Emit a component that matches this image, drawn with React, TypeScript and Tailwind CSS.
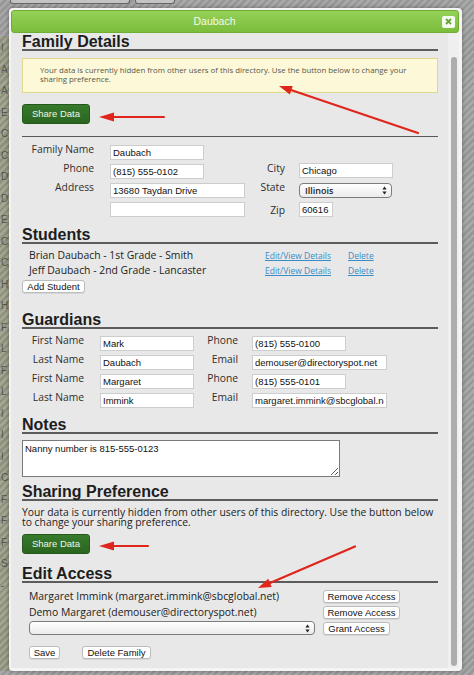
import React from "react";

const body = "font-['Open_Sans','DejaVu_Sans',sans-serif]";
const arial = "font-['Liberation_Sans',Arial,sans-serif]";

const Heading = ({ children, className = "" }: { children: React.ReactNode; className?: string }) => (
  <h2
    className={`${arial} text-[16px] font-bold leading-[15px] text-[#1d1d1d] border-b-2 border-[#5c5c5c] ${className}`}
  >
    {children}
  </h2>
);

const Field = ({ value = "", w }: { value?: string; w: string }) => (
  <input
    readOnly
    value={value}
    className={`${arial} ${w} block h-[15px] border border-[#cdcdcd] bg-white px-[2px] text-[9.5px] text-[#111] outline-none`}
  />
);

const GrayButton = ({ label, w }: { label: string; w: string }) => (
  <button
    className={`${arial} ${w} block h-[13px] rounded-[3px] border border-[#bcbcbc] bg-white text-[9.5px] leading-[11px] text-[#111] shadow-[0_1px_0_#d6d6d6]`}
  >
    {label}
  </button>
);

const ShareButton = ({ className = "" }: { className?: string }) => (
  <button
    className={`${arial} ${className} block w-[68px] h-[20px] rounded-[3px] border border-[#235a1a] bg-gradient-to-b from-[#387a2c] to-[#2a6520] text-[9.5px] text-[#eef5ea]`}
  >
    Share Data
  </button>
);

const SelectArrows = () => (
  <svg width="5" height="9" viewBox="0 0 5 9" className="block">
    <path d="M2.5 0.5 L4.6 3.6 L0.4 3.6 Z" fill="#222" />
    <path d="M2.5 8.5 L4.6 5.4 L0.4 5.4 Z" fill="#222" />
  </svg>
);

const Select = ({ value = "", w, h }: { value?: string; w: string; h: string }) => (
  <div
    className={`${w} ${h} flex items-center justify-between rounded-[4px] border border-[#7c7c7c] bg-gradient-to-b from-white to-[#ececec] pl-[5px] pr-[4px]`}
  >
    <span className={`${body} text-[9px] leading-[10px] font-semibold text-[#222]`}>{value}</span>
    <SelectArrows />
  </div>
);

const label = `${body} text-[10.3px] leading-[8px] text-[#2e2e2e] text-right`;

const Arrows = () => (
  <svg className="pointer-events-none absolute left-0 top-0" width="474" height="675" viewBox="0 0 474 675">
    <g stroke="#e0261c" strokeWidth="2.2" strokeLinecap="round" fill="none">
      <line x1="418" y1="133" x2="291" y2="90" />
      <line x1="164" y1="117" x2="112" y2="117" />
      <line x1="148" y1="546" x2="112" y2="546" />
      <line x1="355" y1="546.5" x2="270" y2="583" />
    </g>
    <g fill="#e0261c">
      <polygon points="279,86 289.9,94.5 292.7,85.9" />
      <polygon points="99,117 114,112.5 114,121.5" />
      <polygon points="99,546 114,541.5 114,550.5" />
      <polygon points="258,588 271.7,587 268.2,578.8" />
    </g>
  </svg>
);

const sideLetters = ["I", "A", "A", "E", "C", "C", "D", "D", "E", "C", "C", "H", "H", "F", "L", "F", "L", "I", "I", "I", "C", "F", "F", "F", "S", "-"];

export default function App() {
  return (
    <div className="relative w-[474px] h-[675px] overflow-hidden flex flex-col bg-[repeating-linear-gradient(135deg,#a9a9a9_0px,#a9a9a9_2.5px,#979797_2.5px,#979797_5px)]">
      {/* page behind the dialog */}
      <div className="h-[8px] flex items-start gap-[5px] pl-[10px]">
        <div className="w-[120px] h-[4px] rounded-b-[3px] border-x border-b border-[#666] bg-[#c4c4c4]" />
        <div className="w-[40px] h-[4px] rounded-b-[3px] border-x border-b border-[#666] bg-[#c4c4c4]" />
      </div>
      <div className="flex flex-1">
        <div className="w-[9px] mt-[28px] mb-[4px] flex flex-col gap-[9.5px] overflow-hidden bg-[repeating-linear-gradient(135deg,#a4a692_0px,#a4a692_2.5px,#8f917f_2.5px,#8f917f_5px)] pl-[1px] pt-[6px]">
          {sideLetters.map((l, i) => (
            <span key={i} className={`${arial} text-[10px] leading-[12px] text-[#3a3a34] opacity-70`}>
              {l}
            </span>
          ))}
        </div>

        {/* dialog */}
        <div className="w-[453px] h-[663px] flex flex-col rounded-[4px] bg-[#f4f4f4] pl-[2px] pr-[3px] pt-[2px] pb-[3px] shadow-[0_0_4px_rgba(0,0,0,0.35)]">
          <div className="h-[23px] flex items-center rounded-[3px] border border-[#6fae34] bg-gradient-to-b from-[#95d158] to-[#7bbd3b]">
            <span className={`${arial} flex-1 mr-[25px] text-center text-[10.5px] text-[#f4faee]`}>Daubach</span>
            <div className="w-[13px] h-[12px] mr-[3px] flex items-center justify-center rounded-[2px] bg-[#f6fbf1]">
              <svg width="7" height="7" viewBox="0 0 7 7" className="block">
                <path d="M1 1 L6 6 M6 1 L1 6" stroke="#66a533" strokeWidth="1.8" />
              </svg>
            </div>
          </div>

          <div className="flex flex-1 min-h-0">
            <div className="flex-1 overflow-hidden bg-[#e8e8e8] pl-[11px] pr-[10px] pt-[1px]">
              <Heading>Family Details</Heading>
              <div className="mt-[7px] h-[35px] border border-[#e0d68c] bg-[#fcf8d8] pl-[17px] pt-[7px]">
                <p className={`${body} whitespace-nowrap text-[7.8px] leading-[8.5px] text-[#5a5746]`}>
                  Your data is currently hidden from other users of this directory. Use the button below to change your
                  <br />
                  sharing preference.
                </p>
              </div>
              <ShareButton className="mt-[11px]" />
              <div className="mt-[12px] h-[1px] bg-[#5a5a5a]" />

              <div className="mt-[8px] flex flex-col gap-[4px]">
                <div className="flex items-start h-[15px]">
                  <span className={`${label} w-[72px]`}>Family Name</span>
                  <div className="ml-[16px] w-[135px]">
                    <Field value="Daubach" w="w-[94px]" />
                  </div>
                </div>
                <div className="flex items-start h-[15px]">
                  <span className={`${label} w-[72px]`}>Phone</span>
                  <div className="ml-[16px] w-[135px]">
                    <Field value="(815) 555-0102" w="w-[94px]" />
                  </div>
                  <span className={`${label} w-[40px]`}>City</span>
                  <div className="ml-[14px] -mt-[1px]">
                    <Field value="Chicago" w="w-[94px]" />
                  </div>
                </div>
                <div className="flex items-start h-[15px]">
                  <span className={`${label} w-[72px]`}>Address</span>
                  <div className="ml-[16px] w-[135px]">
                    <Field value="13680 Taydan Drive" w="w-[135px]" />
                  </div>
                  <span className={`${label} w-[40px]`}>State</span>
                  <div className="ml-[14px]">
                    <Select value="Illinois" w="w-[93px]" h="h-[15px]" />
                  </div>
                </div>
                <div className="flex items-start h-[15px]">
                  <span className={`${label} w-[72px]`} />
                  <div className="ml-[16px] w-[135px]">
                    <Field w="w-[135px]" />
                  </div>
                  <span className={`${label} w-[40px] pt-[4px]`}>Zip</span>
                  <div className="ml-[14px]">
                    <Field value="60616" w="w-[34px]" />
                  </div>
                </div>
              </div>

              <Heading className="mt-[10px]">Students</Heading>
              <div className="mt-[4px] pl-[7px]">
                {[
                  "Brian Daubach - 1st Grade - Smith",
                  "Jeff Daubach - 2nd Grade - Lancaster",
                ].map((s) => (
                  <div key={s} className="flex items-baseline h-[15px] leading-[15px]">
                    <span className={`${body} w-[236px] text-[10.4px] text-[#222]`}>{s}</span>
                    <a className={`${body} w-[83px] text-[8.5px] text-[#3b8bc6] underline`}>Edit/View Details</a>
                    <a className={`${body} text-[8.5px] text-[#3b8bc6] underline`}>Delete</a>
                  </div>
                ))}
              </div>
              <div className="mt-[2px] flex">
                <GrayButton label="Add Student" w="w-[63px]" />
              </div>

              <Heading className="mt-[19px]">Guardians</Heading>
              <div className="mt-[7px] flex flex-col gap-[4px]">
                {[
                  ["First Name", "Mark", "Phone", "(815) 555-0100", "w-[94px]"],
                  ["Last Name", "Daubach", "Email", "demouser@directoryspot.net", "w-[135px]"],
                  ["First Name", "Margaret", "Phone", "(815) 555-0101", "w-[94px]"],
                  ["Last Name", "Immink", "Email", "margaret.immink@sbcglobal.net", "w-[135px]"],
                ].map(([l1, v1, l2, v2, w2], i) => (
                  <div key={i} className="flex items-start h-[15px]">
                    <span className={`${label} w-[62px]`}>{l1}</span>
                    <div className="ml-[16px] w-[94px]">
                      <Field value={v1} w="w-[94px]" />
                    </div>
                    <span className={`${label} w-[44px]`}>{l2}</span>
                    <div className="ml-[14px]">
                      <Field value={v2} w={w2} />
                    </div>
                  </div>
                ))}
              </div>

              <Heading className="mt-[9px]">Notes</Heading>
              <textarea
                readOnly
                value="Nanny number is 815-555-0123"
                className={`${arial} mt-[6px] block w-[318px] h-[37px] resize border border-[#7a7a7a] bg-white px-[2px] py-[1px] text-[9.5px] text-[#111] outline-none`}
              />

              <Heading className="mt-[7px]">Sharing Preference</Heading>
              <p className={`${body} mt-[6px] whitespace-nowrap text-[10.35px] leading-[10px] text-[#222]`}>
                Your data is currently hidden from other users of this directory. Use the button below
                <br />
                to change your sharing preference.
              </p>
              <ShareButton className="mt-[7px]" />

              <Heading className="mt-[12px]">Edit Access</Heading>
              <div className="mt-[7px] pl-[7px]">
                <div className="flex items-start h-[14px]">
                  <span className={`${body} w-[294px] text-[10.4px] leading-[12px] text-[#222]`}>
                    Margaret Immink (margaret.immink@sbcglobal.net)
                  </span>
                  <GrayButton label="Remove Access" w="w-[77px]" />
                </div>
                <div className="mt-[2px] flex items-start h-[14px]">
                  <span className={`${body} w-[294px] text-[10.4px] leading-[12px] text-[#222]`}>
                    Demo Margaret (demouser@directoryspot.net)
                  </span>
                  <GrayButton label="Remove Access" w="w-[77px]" />
                </div>
                <div className="mt-[1px] flex items-center h-[14px]">
                  <Select w="w-[286px]" h="h-[14px]" />
                  <div className="ml-[8px]">
                    <GrayButton label="Grant Access" w="w-[67px]" />
                  </div>
                </div>
                <div className="mt-[11px] flex items-center gap-[22px]">
                  <GrayButton label="Save" w="w-[31px]" />
                  <GrayButton label="Delete Family" w="w-[69px]" />
                </div>
              </div>
            </div>

            {/* scrollbar */}
            <div className="w-[11px] flex flex-col bg-[#efefef] pl-[3px] pr-[2px] pt-[24px] pb-[2px]">
              <div className="flex-1 rounded-full bg-[#adadad]" />
            </div>
          </div>
        </div>
      </div>
      <Arrows />
    </div>
  );
}
